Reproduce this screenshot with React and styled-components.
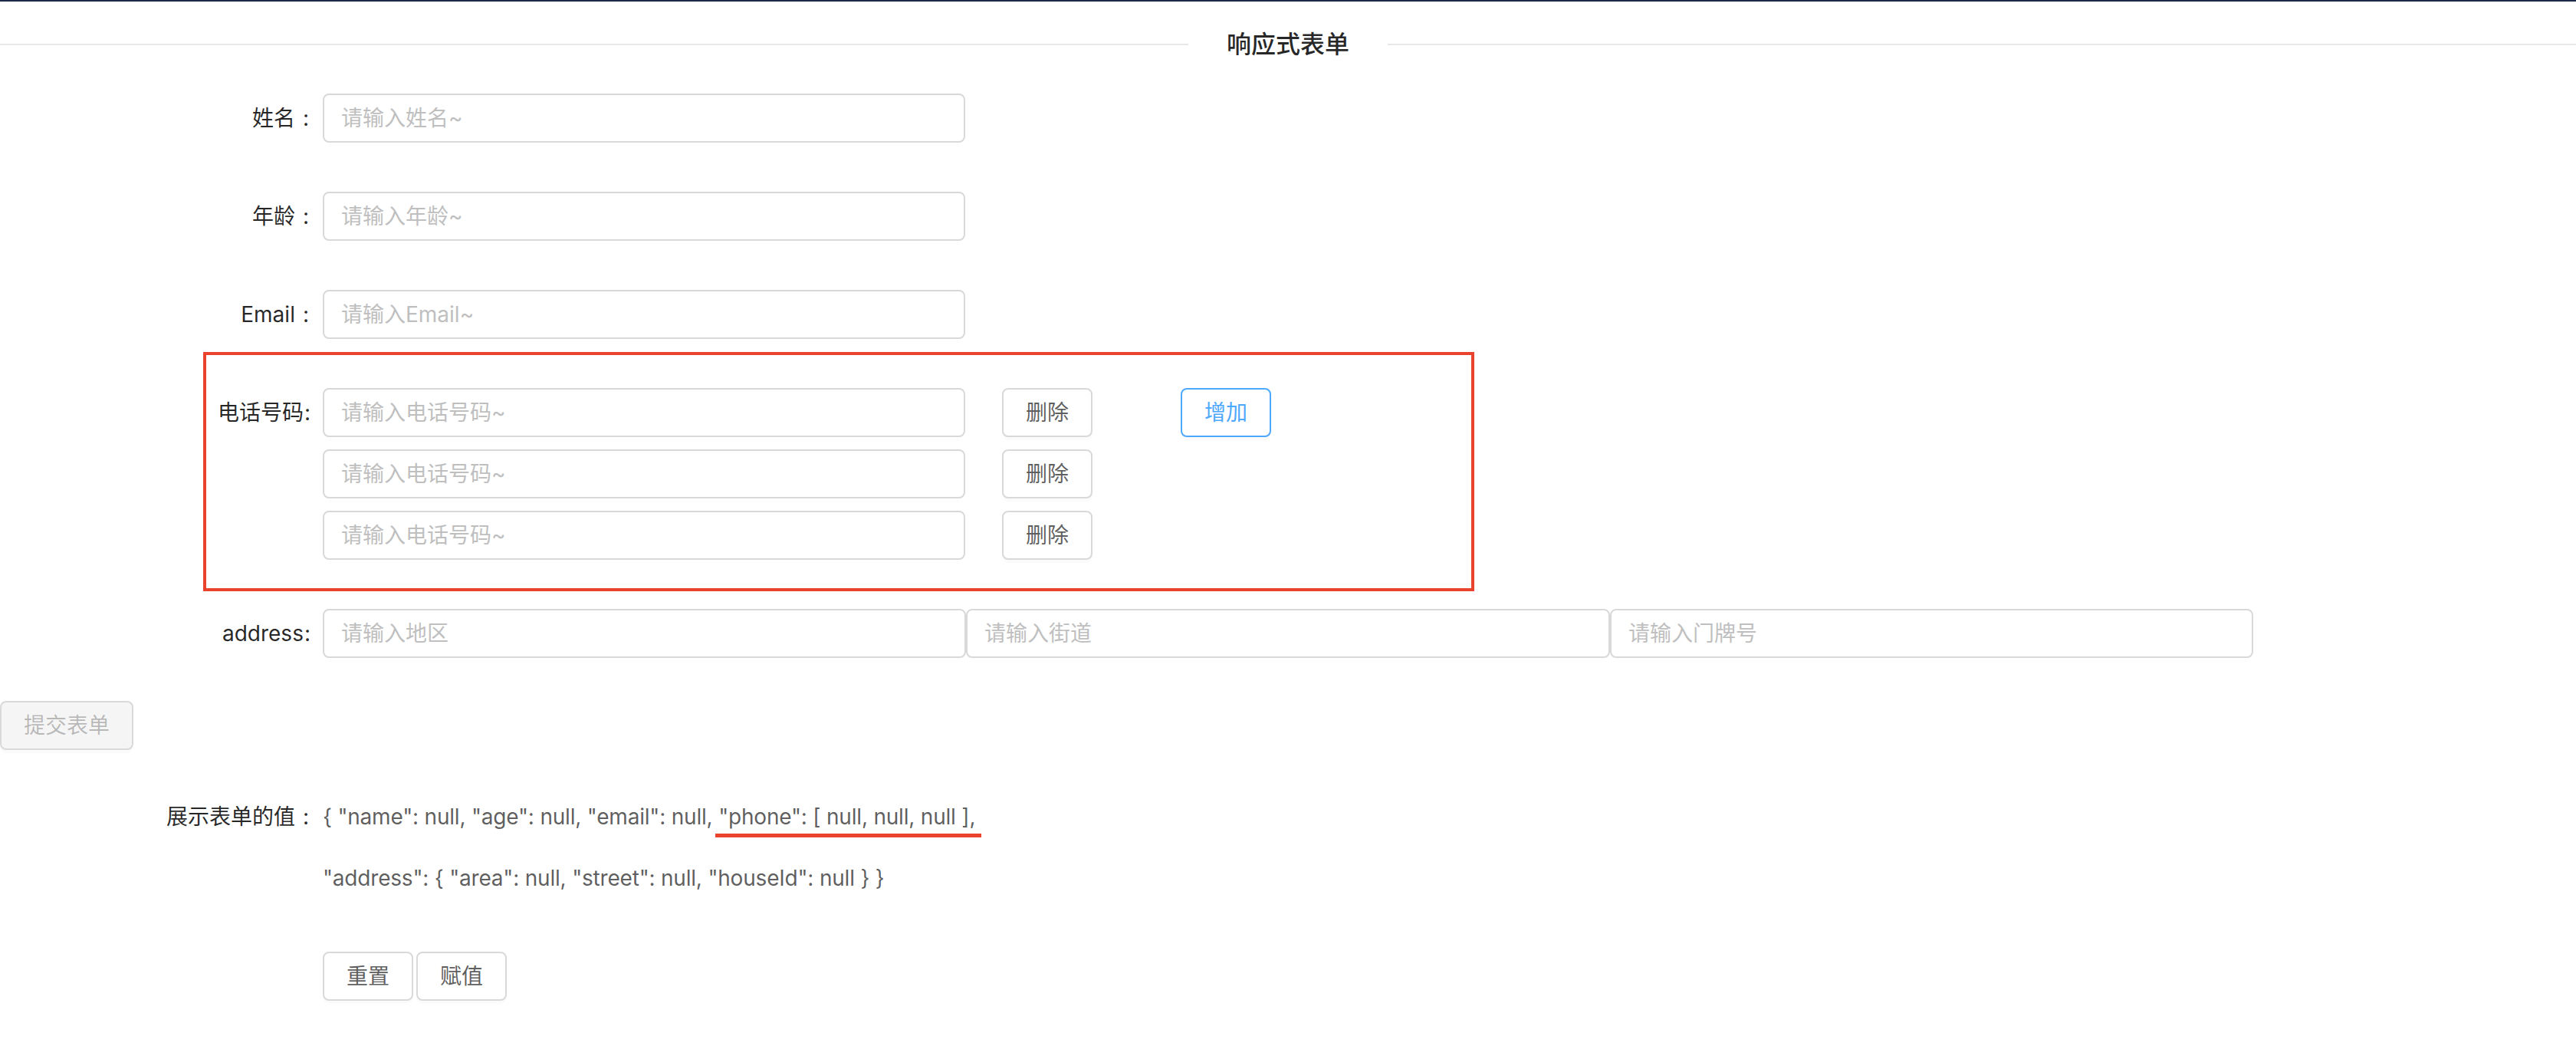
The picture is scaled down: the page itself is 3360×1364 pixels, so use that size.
import React from "react"
import styled, { createGlobalStyle } from "styled-components"

const GlobalStyle = createGlobalStyle`
  html, body {
    margin: 0;
    padding: 0;
    background: #fff;
  }
  body {
    font-family: Inter, "Noto Sans CJK SC", sans-serif;
    font-size: 28px;
    color: rgba(0, 0, 0, 0.65);
  }
  * {
    box-sizing: border-box;
  }
`

const Page = styled.div`
  width: 3360px;
  min-height: 1364px;
  border-top: 2px solid #1d2b4a;
`

const Divider = styled.div`
  display: flex;
  align-items: center;
  margin: 32px 0;
  height: 48px;

  &::before,
  &::after {
    content: "";
    flex: 1;
    border-top: 2px solid #e8e8e8;
  }
`

const Title = styled.h2`
  margin: 0;
  padding: 0 50px;
  font-size: 32px;
  line-height: 48px;
  font-weight: 500;
  color: rgba(0, 0, 0, 0.85);
`

const FormItem = styled.div`
  position: relative;
  display: flex;
  align-items: flex-start;
  margin-bottom: 48px;
`

const Label = styled.label`
  width: 421px;
  flex: none;
  padding-right: ${p => (p.$tight ? 16 : 18)}px;
  text-align: right;
  line-height: 80px;
  color: rgba(0, 0, 0, 0.85);
  white-space: nowrap;
`

const Colon = styled.span`
  margin-left: ${p => (p.$tight ? 1 : 10)}px;
`

const Control = styled.div`
  display: flex;
  flex-direction: ${p => (p.$column ? "column" : "row")};
`

const Row = styled.div`
  display: flex;
  align-items: center;
  height: 80px;
`

const Input = styled.input`
  width: ${p => p.$w || 838}px;
  height: 64px;
  padding: 0 22px;
  border: 2px solid #d9d9d9;
  border-radius: 8px;
  font-family: inherit;
  font-size: 28px;
  color: rgba(0, 0, 0, 0.65);
  background: #fff;
  outline: none;

  &::placeholder {
    color: #bfbfbf;
  }
`

const Button = styled.button`
  height: 64px;
  padding: 0 29px;
  margin-left: ${p => p.$ml || 0}px;
  border: 2px solid ${p => (p.$primary ? "#4ea8fb" : "#d9d9d9")};
  border-radius: 8px;
  background: ${p => (p.disabled ? "#f5f5f5" : "#fff")};
  color: ${p =>
    p.disabled ? "rgba(0, 0, 0, 0.25)" : p.$primary ? "#4ea8fb" : "rgba(0, 0, 0, 0.65)"};
  font-family: inherit;
  font-size: 28px;
  line-height: 1;
  box-shadow: 0 4px 0 rgba(0, 0, 0, 0.015);
  cursor: ${p => (p.disabled ? "not-allowed" : "pointer")};
  flex: none;
`

/* red annotation frame drawn over the phone group */
const Highlight = styled.div`
  position: absolute;
  left: 265px;
  top: -39px;
  width: 1658px;
  height: 312px;
  border: 4px solid #e9432e;
  pointer-events: none;
`

const SubmitBar = styled.div`
  height: 64px;
  margin: 1px 0 47px;
`

const Values = styled.div`
  display: flex;
  flex-direction: column;
  line-height: 80px;
  letter-spacing: -0.2px;
  color: rgba(0, 0, 0, 0.65);
  white-space: pre;
`

const Marked = styled.span`
  position: relative;

  &::after {
    content: "";
    position: absolute;
    left: -4px;
    right: -8px;
    bottom: -10px;
    height: 5px;
    background: #e9432e;
  }
`

const Actions = styled.div`
  display: flex;
  align-items: center;
  gap: 4px;
  height: 80px;
  padding-left: 421px;
`

const phones = [0, 1, 2]

const App = () => {
  return (
    <Page>
      <GlobalStyle />
      <Divider>
        <Title>响应式表单</Title>
      </Divider>

      <FormItem>
        <Label>
          姓名<Colon>:</Colon>
        </Label>
        <Control>
          <Row>
            <Input placeholder="请输入姓名~" />
          </Row>
        </Control>
      </FormItem>

      <FormItem>
        <Label>
          年龄<Colon>:</Colon>
        </Label>
        <Control>
          <Row>
            <Input placeholder="请输入年龄~" />
          </Row>
        </Control>
      </FormItem>

      <FormItem>
        <Label>
          Email<Colon>:</Colon>
        </Label>
        <Control>
          <Row>
            <Input placeholder="请输入Email~" />
          </Row>
        </Control>
      </FormItem>

      <FormItem>
        <Highlight />
        <Label $tight>
          电话号码<Colon $tight>:</Colon>
        </Label>
        <Control $column>
          {phones.map(i => (
            <Row key={i}>
              <Input placeholder="请输入电话号码~" />
              <Button $ml={48}>删除</Button>
              {i === 0 && (
                <Button $ml={115} $primary>
                  增加
                </Button>
              )}
            </Row>
          ))}
        </Control>
      </FormItem>

      <FormItem>
        <Label $tight>
          address<Colon $tight>:</Colon>
        </Label>
        <Control>
          <Row>
            <Input $w={839} placeholder="请输入地区" />
            <Input $w={840} placeholder="请输入街道" />
            <Input $w={839} placeholder="请输入门牌号" />
          </Row>
        </Control>
      </FormItem>

      <SubmitBar>
        <Button disabled>提交表单</Button>
      </SubmitBar>

      <FormItem>
        <Label>
          展示表单的值<Colon>:</Colon>
        </Label>
        <Values>
          <span>
            {'{ "name": null, "age": null, "email": null, '}
            <Marked>{'"phone": [ null, null, null ],'}</Marked>
          </span>
          <span>{'"address": { "area": null, "street": null, "houseId": null } }'}</span>
        </Values>
      </FormItem>

      <Actions>
        <Button>重置</Button>
        <Button>赋值</Button>
      </Actions>
    </Page>
  )
}

export default App
